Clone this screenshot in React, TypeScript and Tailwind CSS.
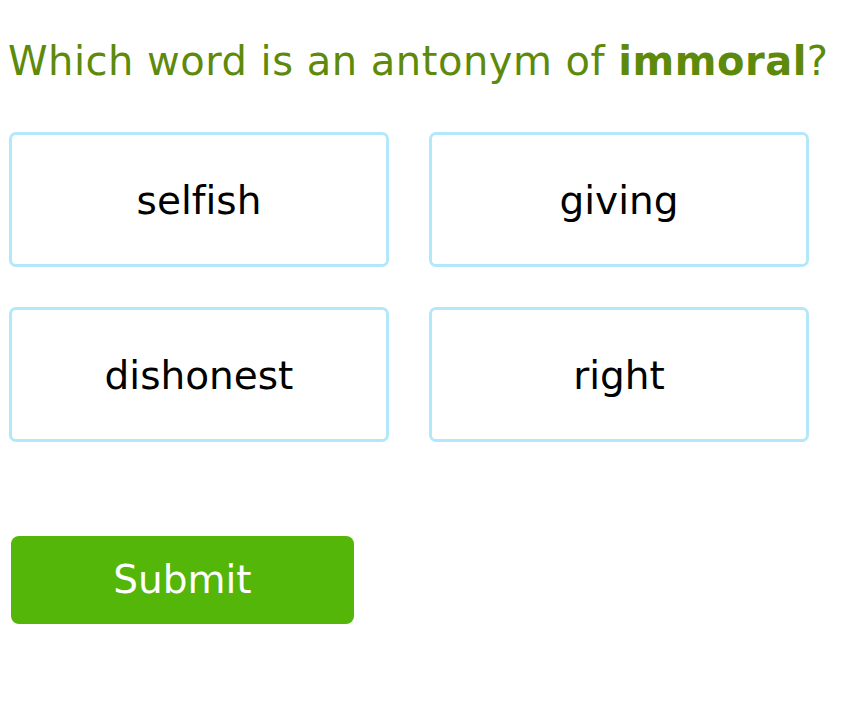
export default function App() {
  const options = ["selfish", "giving", "dishonest", "right"];
  return (
    <div
      className="w-[856px] h-[719px] bg-white overflow-hidden [font-variant-ligatures:none]"
      style={{ fontFamily: '"DejaVu Sans", Verdana, sans-serif' }}
    >
      <div className="pl-[8px] pt-[35px]">
        <h1 className="text-[40px] leading-[52px] text-[#5d8a0b] tracking-[0.5px] whitespace-nowrap">
          Which word is an antonym of <span className="font-bold">immoral</span>?
        </h1>
      </div>
      <div className="grid grid-cols-[380px_380px] gap-x-[40px] gap-y-[40px] pl-[9px] pt-[45px]">
        {options.map((o) => (
          <div
            key={o}
            className="h-[135px] rounded-[7px] border-[3px] border-[#b3e8fb] bg-white flex items-center justify-center pt-[3px] text-[39px] text-black"
          >
            {o}
          </div>
        ))}
      </div>
      <div className="pl-[11px] pt-[94px]">
        <button className="w-[343px] h-[88px] rounded-[8px] bg-[#53b608] text-white text-[39px] flex items-center justify-center">
          Submit
        </button>
      </div>
    </div>
  );
}
